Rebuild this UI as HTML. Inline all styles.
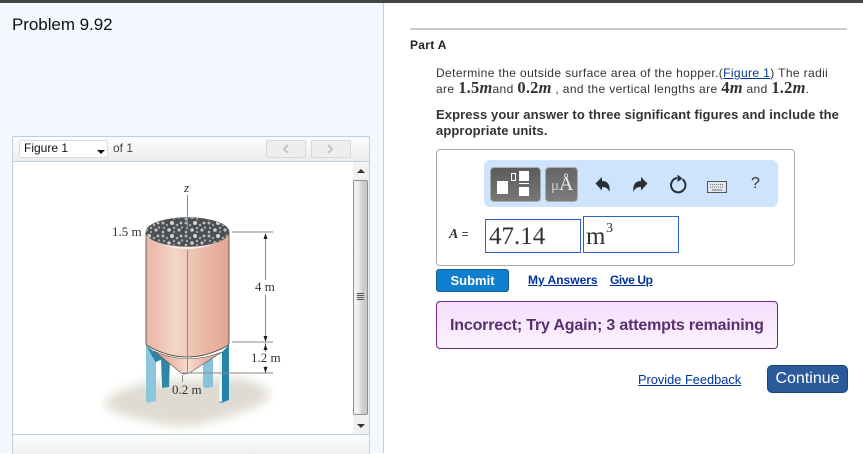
<!DOCTYPE html>
<html><head><meta charset="utf-8">
<style>
html,body{margin:0;padding:0;width:863px;height:453px;overflow:hidden;background:#fff;font-family:"Liberation Sans",Arial,sans-serif}
.a{position:absolute;white-space:nowrap}
a{color:#003399;text-decoration:underline}
.s{font-family:"Liberation Serif",serif;font-weight:bold;font-size:16.500px;line-height:0;color:#333;letter-spacing:.2px}
.s i{font-style:italic}
</style></head><body>
<div class="a" style="left:0;top:0;width:863px;height:3px;background:#444"></div>
<div class="a" style="left:0;top:3px;width:383px;height:450px;background:#f3f8ff;border-right:1px solid #c0d0e0"></div>
<div class="a" style="left:12px;top:15px;font-size:17px;color:#111;letter-spacing:-.05px">Problem 9.92</div>

<!-- figure panel -->
<div class="a" style="left:12px;top:136px;width:356px;height:317px;background:#fff;border:1px solid #bcd0e0;border-bottom:0"></div>
<div class="a" style="left:13px;top:137px;width:356px;height:24px;background:linear-gradient(#fdfdfd,#ececec);border-bottom:1px solid #c0d2e0"></div>
<div class="a" style="left:19px;top:140px;width:87px;height:16px;background:#fff;border:1px solid #ddd;border-radius:2px"></div>
<div class="a" style="left:24px;top:141px;font-size:12px;color:#111;line-height:15px">Figure 1</div>
<div class="a" style="left:97px;top:150px;width:0;height:0;border:4px solid transparent;border-top:4px solid #111;border-bottom:0"></div>
<div class="a" style="left:113px;top:141px;font-size:12px;color:#444;line-height:15px">of 1</div>
<div class="a" style="left:266px;top:140px;width:38px;height:16px;background:#eee;border:1px solid #d8d8d8;border-radius:2px"></div>
<div class="a" style="left:311px;top:140px;width:38px;height:16px;background:#eee;border:1px solid #d8d8d8;border-radius:2px"></div>
<svg class="a" style="left:266px;top:140px" width="90" height="20"><path d="M22 5l-4 4 4 4M62 5l4 4-4 4" fill="none" stroke="#c4c4c4" stroke-width="2"/></svg>

<!-- scrollbar -->
<div class="a" style="left:353px;top:162px;width:16px;height:272px;background:#f1f1f1"></div>
<div class="a" style="left:353px;top:180px;width:13px;height:233px;background:linear-gradient(90deg,#f2f2f2,#f0f0f0 30%,#d0d0d0 65%,#c8c8c8);border:1px solid #8f8f8f;border-radius:2px"></div>
<div class="a" style="left:357px;top:169px;width:0;height:0;border:4px solid transparent;border-bottom:4px solid #333;border-top:0"></div>
<div class="a" style="left:357px;top:424px;width:0;height:0;border:4px solid transparent;border-top:4px solid #333;border-bottom:0"></div>
<div class="a" style="left:357px;top:293px;width:7px;height:8px;background:repeating-linear-gradient(#555 0,#555 1px,#ddd 1px,#ddd 2px)"></div>

<!-- footer -->
<div class="a" style="left:13px;top:434px;width:356px;height:19px;background:linear-gradient(#fdfdfd,#efefef);border-top:1px solid #bcd0e0"></div>

<!-- hopper -->
<svg class="a" style="left:100px;top:170px" width="200" height="264" viewBox="100 170 200 264">
<defs>
<linearGradient id="c" x1="0" x2="1" y1="0" y2="0"><stop offset="0" stop-color="#e8b5a3"/><stop offset=".35" stop-color="#f5d5c8"/><stop offset=".7" stop-color="#eab8a5"/><stop offset="1" stop-color="#e2a792"/></linearGradient>
<linearGradient id="k" x1="0" x2="1" y1="0" y2="0"><stop offset="0" stop-color="#d99680"/><stop offset=".5" stop-color="#f8ddd2"/><stop offset="1" stop-color="#d48e78"/></linearGradient>
<filter id="b" x="-20%" y="-40%" width="140%" height="180%"><feGaussianBlur stdDeviation="5"/></filter>
<pattern id="g" width="23" height="13" patternUnits="userSpaceOnUse"><rect width="23" height="13" fill="#4c4f52"/>
<circle cx="2" cy="2" r="1.500" fill="#b5b8ba"/><circle cx="6" cy="4" r="1.200" fill="#9ea1a3"/><circle cx="11" cy="2" r="2" fill="#d4d6d8"/><circle cx="16" cy="4" r="1.300" fill="#a9acae"/><circle cx="20" cy="2" r="1.400" fill="#c3c5c7"/><circle cx="3" cy="7" r="1.200" fill="#a2a5a7"/><circle cx="8" cy="9" r="1.800" fill="#d0d2d4"/><circle cx="13" cy="7" r="1.200" fill="#aeb1b3"/><circle cx="18" cy="9" r="1.600" fill="#bfc1c3"/><circle cx="2" cy="11" r="1.300" fill="#bdbfc1"/><circle cx="13" cy="11" r="1.200" fill="#96999b"/><circle cx="21" cy="6.500" r="1.200" fill="#a5a8aa"/>
</pattern>
</defs>
<path d="M104 402c18-18 50-22 83-22 25 0 40-5 55-1 18 2 28 12 28 18-6 8-28 16-46 21-18 6-35 9-48 8-22-3-72-12-72-24z" fill="#dedcd2" filter="url(#b)"/>
<path d="M161 358h9l-1 29-8 1z" fill="#2f86a6"/><path d="M161 358l1 30h-1.500z" fill="#fff"/>
<path d="M203 358l10-2v31l-8 1-2-2z" fill="#88c3da"/>
<path d="M146 345l10 7v49l-9 2-1-3z" fill="#8cc6dc"/><path d="M147 347l9 6v10z" fill="#2f86a6"/><path d="M156 352l9 6-9 4z" fill="#2f86a6"/>
<path d="M222 352l7-7v55l-8 3-2-1v-47z" fill="#2484a6"/><path d="M219 352h3v50l-3-.5z" fill="#eaf4f8"/>
<path d="M154 351q33 15 68 1l-31 20q-3 2-6 2t-5-2z" fill="url(#k)" stroke="#555" stroke-width=".6"/>
<path d="M146 232v111q0 2 2 3q39 22 79 0q2-1 2-3V232z" fill="url(#c)" stroke="#444" stroke-width=".8"/>
<path d="M147 236q40 24 81 0" fill="none" stroke="#fbeee8" stroke-width="2"/>
<ellipse cx="187.500" cy="232" rx="41.500" ry="14.500" fill="url(#g)" stroke="#555" stroke-width=".6"/>
<path d="M187.500 195v35M187.500 250v122M183 373h90M232 232h41M232 342h41M265.500 234v46M265.500 295v46M265.500 343v9M265.500 366v7" stroke="#8a8a8a" stroke-width="1" fill="none"/>
<path d="M265.500 233l-2 6h4zM265.500 342l-2-6h4zM265.500 344l-2 6h4zM265.500 373l-2-6h4z" fill="#222"/>
<path d="M182.500 375v7" stroke="#888"/>
<g font-family="Liberation Serif,serif" font-size="13px" fill="#333">
<text x="184" y="192" font-style="italic">z</text>
<text x="112" y="236">1.5 m</text>
<text x="255" y="291">4 m</text>
<text x="251" y="362">1.2 m</text>
<text x="172" y="394">0.2 m</text>
</g>
</svg>

<!-- right -->
<div class="a" style="left:410px;top:28px;width:437px;height:2px;background:#ccc"></div>
<div class="a" style="left:410px;top:38px;font-size:12px;font-weight:bold;color:#222;line-height:15px;letter-spacing:.3px">Part A</div>
<div class="a" style="left:436px;top:65px;font-size:12px;color:#333;line-height:16px;letter-spacing:.38px">Determine the outside surface area of the hopper.(<a href="#">Figure 1</a>) The radii<br>are <span class="s">1.5<i>m</i></span>and <span class="s">0.2<i>m</i></span> , and the vertical lengths are <span class="s">4<i>m</i></span> and <span class="s">1.2<i>m</i></span>.</div>
<div class="a" style="left:436px;top:107px;font-size:13px;font-weight:bold;color:#333;line-height:16px;letter-spacing:.1px">Express your answer to three significant figures and include the<br>appropriate units.</div>

<div class="a" style="left:436px;top:149px;width:357px;height:115px;border:1px solid #aaa;border-radius:4px;background:#fff"></div>
<div class="a" style="left:484px;top:160px;width:294px;height:47px;background:#cde4fc;border-radius:6px"></div>
<div class="a" style="left:490px;top:167px;width:49px;height:33px;background:linear-gradient(#5c5c5c,#777);border:1px solid #aaa;border-radius:4px"></div>
<svg class="a" style="left:490px;top:167px" width="50" height="34"><rect x="7" y="14" width="11" height="13" fill="#fff"/><rect x="21.500" y="6.500" width="4" height="7" fill="none" stroke="#fff"/><rect x="29" y="4" width="10" height="10" fill="#fff"/><rect x="29" y="16" width="10" height="1" fill="#fff"/><rect x="29" y="20" width="10" height="9" fill="#fff"/></svg>
<div class="a" style="left:545px;top:167px;width:31px;height:33px;background:linear-gradient(#666,#7c7c7c);border:1px solid #aaa;border-radius:4px"></div>
<div class="a" style="left:551px;top:172px;font-family:'Liberation Serif',serif;color:#eee;line-height:24px"><span style="font-size:15px;color:#ccc">μ</span><span style="font-size:20px">Å</span></div>
<svg class="a" style="left:590px;top:170px" width="100" height="30" viewBox="590 170 100 30">
<path d="M595.500 183.500l6.500-6.500v4c5.500 0 8.500 3.500 7.500 11-1.200-3.500-3.500-5-7.500-5v3.500z" fill="#2a2f36"/>
<path d="M647.500 183.500l-6.500-6.500v4c-5.500 0-8.500 3.500-7.500 11 1.200-3.500 3.500-5 7.500-5v3.500z" fill="#2a2f36"/>
<path d="M677 178a7.200 7.200 0 1 0 5.500 1.300" fill="none" stroke="#2a2f36" stroke-width="2"/>
<path d="M677.500 174.500v7.500l5-3.500z" fill="#2a2f36"/>
</svg>
<svg class="a" style="left:706px;top:179px" width="22" height="15"><rect x="1.500" y="2.500" width="19" height="11" fill="#dfe6ee" stroke="#555"/><path d="M4 5.500h14M4 8h14" stroke="#777" stroke-dasharray="1 1"/><path d="M6 11h10" stroke="#777"/></svg>
<div class="a" style="left:751px;top:174px;font-size:16px;color:#333;line-height:20px">?</div>

<div class="a" style="left:449px;top:226px;font-size:12px;color:#333;line-height:16px"><span style="font-family:'Liberation Serif',serif;font-style:italic;font-weight:bold;font-size:14px">A</span> =</div>
<div class="a" style="left:485px;top:219px;height:32px;border:1px solid #2a63c8;font-family:'Liberation Serif',serif;font-size:25px;color:#333;line-height:34px;padding-left:3px;width:91px">47.14</div>
<div class="a" style="left:583px;top:216px;width:94px;height:35px;border:1px solid #2a63c8;font-family:'Liberation Serif',serif;color:#333"><span style="position:absolute;left:2px;top:5px;font-size:25px;line-height:30px">m</span><span style="position:absolute;left:22px;top:4px;font-size:14px;line-height:16px">3</span></div>

<div class="a" style="left:436px;top:269px;width:71px;height:21px;background:#0f7fcf;border:1px solid #16608f;border-radius:3px;color:#fff;font-size:13px;font-weight:bold;text-align:center;line-height:21px">Submit</div>
<a class="a" href="#" style="left:528px;top:273px;font-size:12px;font-weight:bold;line-height:15px">My Answers</a>
<a class="a" href="#" style="left:610px;top:273px;font-size:12px;font-weight:bold;line-height:15px;letter-spacing:-.4px">Give Up</a>

<div class="a" style="left:436px;top:301px;width:340px;height:46px;border:1px solid #6a2a87;border-radius:4px;background:linear-gradient(#f3dffc,#fdf2ff);color:#59306f;font-size:16px;font-weight:bold;line-height:47px;text-indent:13px;letter-spacing:-.18px">Incorrect; Try Again; 3 attempts remaining</div>

<a class="a" href="#" style="left:638px;top:372px;line-height:16px;font-size:12.800px">Provide Feedback</a>
<div class="a" style="left:767px;top:365px;width:79px;height:26px;background:#2a5a9a;border:1px solid #1d4478;border-radius:5px;color:#fff;font-size:16px;text-align:center;line-height:26px">Continue</div>
</body></html>
